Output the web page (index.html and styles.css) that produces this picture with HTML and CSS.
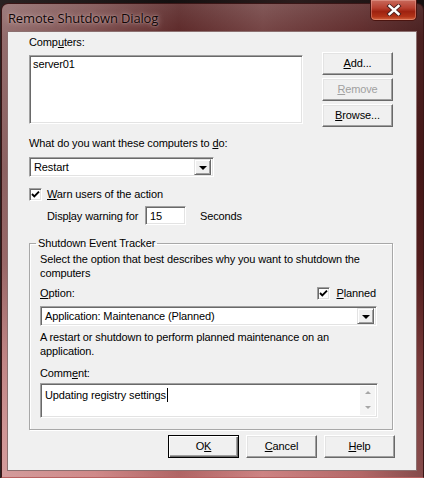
FILE: index.html
```html
<!DOCTYPE html>
<html>
<head>
<meta charset="utf-8">
<title>Remote Shutdown Dialog</title>
<link rel="stylesheet" href="styles.css">
</head>
<body>
<div class="window">
  <div class="titlebar">
    <span class="title">Remote Shutdown Dialog</span>
    <div class="close">
      <svg width="16" height="12" viewBox="0 0 16 12">
        <path d="M3.5 2 L12.5 10 M12.5 2 L3.5 10" stroke="#4a2020" stroke-width="4.2" stroke-linecap="square" fill="none"/>
        <path d="M3.5 2 L12.5 10 M12.5 2 L3.5 10" stroke="#ffffff" stroke-width="2.4" stroke-linecap="square" fill="none"/>
      </svg>
    </div>
  </div>
  <div class="client">
    <div class="top-row">
      <div class="computers">
        <div class="label">Comp<u>u</u>ters:</div>
        <div class="listbox sunken">server01</div>
      </div>
      <div class="side-buttons">
        <div class="btn"><span><u>A</u>dd...</span></div>
        <div class="btn disabled"><span><u>R</u>emove</span></div>
        <div class="btn"><span><u>B</u>rowse...</span></div>
      </div>
    </div>
    <div class="label what">What do you want these computers to <u>d</u>o:</div>
    <div class="combo sunken restart">
      <span class="combo-text">Restart</span>
      <span class="dd"><i class="tri"></i></span>
    </div>
    <div class="check-row warn">
      <span class="checkbox"><svg width="11" height="11" viewBox="0 0 11 11"><path d="M2 5 L4.3 7.3 L9 2.6" stroke="#000" stroke-width="1.9" fill="none"/></svg></span>
      <span class="check-label"><u>W</u>arn users of the action</span>
    </div>
    <div class="display-row">
      <span class="disp">Disp<u>l</u>ay warning for</span>
      <span class="num sunken">15</span>
      <span class="secs">Seconds</span>
    </div>
    <fieldset class="group">
      <legend>Shutdown Event Tracker</legend>
      <p class="desc">Select the option that best describes why you want to shutdown the<br>computers</p>
      <div class="option-row">
        <span><u>O</u>ption:</span>
        <span class="check-row planned">
          <span class="checkbox"><svg width="11" height="11" viewBox="0 0 11 11"><path d="M2 5 L4.3 7.3 L9 2.6" stroke="#000" stroke-width="1.9" fill="none"/></svg></span>
          <span class="check-label"><u>P</u>lanned</span>
        </span>
      </div>
      <div class="combo sunken wide">
        <span class="combo-text">Application: Maintenance (Planned)</span>
        <span class="dd"><i class="tri"></i></span>
      </div>
      <p class="desc desc2">A restart or shutdown to perform planned maintenance on an<br>application.</p>
      <div class="label comment-label">Comm<u>e</u>nt:</div>
      <div class="comment sunken">
        <span class="comment-text">Updating registry settings<span class="caret"></span></span>
        <span class="vscroll">
          <i class="arrow up"></i>
          <i class="arrow down"></i>
        </span>
      </div>
    </fieldset>
    <div class="dialog-buttons">
      <div class="btn default"><span>O<u>K</u></span></div>
      <div class="btn"><span><u>C</u>ancel</span></div>
      <div class="btn"><span><u>H</u>elp</span></div>
    </div>
  </div>
</div>
</body>
</html>
```
FILE: styles.css
```css
html, body {
  margin: 0;
  padding: 0;
}
body {
  width: 424px;
  height: 478px;
  overflow: hidden;
  background: linear-gradient(90deg, #2a2222 0%, #141010 40%, #2b1c1c 70%, #171010 100%);
  font-family: "Liberation Sans", Arial, sans-serif;
  font-size: 11px;
  letter-spacing: -0.12px;
  color: #000;
}
u { text-decoration: underline; text-underline-offset: 1px; }

.window {
  box-sizing: border-box;
  margin: 3px 0 0 1px;
  width: 423px;
  height: 475px;
  border: 1px solid #3a1616;
  border-bottom-color: #b86060;
  border-radius: 7px 7px 0 0;
  display: flex;
  flex-direction: column;
  background:
    linear-gradient(90deg, rgba(190,165,165,.5) 0%, rgba(160,120,120,.35) 22%, rgba(70,15,15,.35) 42%, rgba(140,95,95,.3) 62%, rgba(80,25,25,.35) 85%, rgba(50,15,15,.55) 100%),
    linear-gradient(180deg, #7e5656 0%, #683434 7%, #5a2020 35%, #742c2c 55%, #c26666 75%, #df8686 90%, #e99393 100%);
}

.titlebar {
  height: 27px;
  display: flex;
  align-items: center;
  padding-left: 6px;
  flex: none;
}
.title {
  font-family: "Open Sans", "Noto Sans", sans-serif;
  font-size: 13px;
  letter-spacing: -0.15px;
  color: #120606;
  text-shadow: 0 0 6px rgba(225,200,200,.85), 0 0 2px rgba(225,200,200,.6);
  margin-top: 1px;
}
.close {
  margin-left: auto;
  margin-right: 6px;
  align-self: flex-start;
  margin-top: -4px;
  width: 47px;
  height: 21px;
  box-sizing: border-box;
  border: 1px solid #4a1410;
  border-top: none;
  border-radius: 0 0 5px 5px;
  background: linear-gradient(180deg, #c86a5c 0%, #b84030 40%, #9e2210 58%, #b23318 82%, #d3643f 100%);
  box-shadow: inset 0 0 0 1px rgba(255,200,190,.35);
  display: flex;
  align-items: center;
  justify-content: center;
}

.client {
  flex: 1;
  margin: 0 6px 6px 5px;
  border: 1px solid #8c7070;
  background: #f0f0f0;
  padding: 3px 0 0 21px;
  display: flex;
  flex-direction: column;
  align-items: flex-start;
}

.label {
  line-height: 14px;
  height: 14px;
}

.sunken {
  box-sizing: border-box;
  background: #fff;
  border: 1px solid;
  border-color: #a0a0a0 #ffffff #ffffff #a0a0a0;
  box-shadow: inset 1px 1px 0 #696969, inset -1px -1px 0 #e3e3e3;
}

.top-row {
  display: grid;
  grid-template-columns: 274px 71px;
  column-gap: 19px;
  align-items: start;
}
.listbox {
  margin-top: 6px;
  height: 69px;
  padding: 2px 3px;
  line-height: 13px;
}
.side-buttons {
  margin-top: 17px;
  display: flex;
  flex-direction: column;
  gap: 3px;
}

.btn {
  box-sizing: border-box;
  height: 23px;
  width: 71px;
  border: 1px solid;
  border-color: #ffffff #696969 #696969 #ffffff;
  box-shadow: inset -1px -1px 0 #a0a0a0, inset 1px 1px 0 #e3e3e3;
  background: #f0f0f0;
  display: flex;
  align-items: center;
  justify-content: center;
  line-height: 13px;
}
.btn.disabled { color: #a0a0a0; }
.btn.default {
  border: 1px solid #000;
  box-shadow: inset 1px 1px 0 #fff, inset -1px -1px 0 #696969, inset -2px -2px 0 #a0a0a0;
}

.what { margin-top: 9px; }

.combo {
  margin-top: 7px;
  height: 20px;
  display: flex;
  align-items: center;
  padding: 2px;
}
.restart { width: 185px; }
.combo-text {
  flex: 1;
  padding-left: 2px;
  line-height: 14px;
}
.dd {
  box-sizing: border-box;
  width: 17px;
  height: 16px;
  border: 1px solid;
  border-color: #e3e3e3 #696969 #696969 #e3e3e3;
  box-shadow: inset 1px 1px 0 #fff, inset -1px -1px 0 #a0a0a0;
  background: #f0f0f0;
  display: flex;
  align-items: center;
  justify-content: center;
}
.tri {
  width: 0;
  height: 0;
  border-left: 4px solid transparent;
  border-right: 4px solid transparent;
  border-top: 4px solid #000;
  margin-top: 1px;
}

.check-row {
  display: flex;
  align-items: center;
  height: 14px;
}
.warn { margin-top: 10px; }
.checkbox {
  box-sizing: border-box;
  width: 13px;
  height: 13px;
  background: #fff;
  border: 1px solid;
  border-color: #a0a0a0 #fff #fff #a0a0a0;
  box-shadow: inset 1px 1px 0 #696969, inset -1px -1px 0 #e3e3e3;
  display: flex;
  align-items: center;
  justify-content: center;
}
.check-label {
  margin-left: 5px;
  line-height: 14px;
}

.display-row {
  margin-top: 5px;
  margin-left: 18px;
  display: flex;
  align-items: center;
  height: 19px;
}
.disp { width: 98px; white-space: nowrap; }
.num {
  width: 41px;
  height: 19px;
  padding: 2px 4px;
  line-height: 14px;
}
.secs { margin-left: 14px; }

.group {
  box-sizing: border-box;
  margin: 11px 0 0 0;
  width: 364px;
  min-width: 0;
  padding: 2px 10px 11px 10px;
  border: 1px solid #a8a8a8;
  box-shadow: inset 1px 1px 0 #fff, 1px 1px 0 #fff;
}
.group legend {
  padding: 0 2px;
  margin-left: -4px;
  line-height: 14px;
}
.desc {
  margin: 0;
  line-height: 14px;
}
.option-row {
  margin-top: 6px;
  width: 337px;
  display: flex;
  justify-content: space-between;
  align-items: center;
  line-height: 14px;
}
.planned .check-label { margin-left: 6px; margin-right: 0; }
.planned { margin-right: 1px; }

.wide {
  margin-top: 6px;
  width: 337px;
}
.desc2 { margin-top: 4px; }
.comment-label { margin-top: 8px; }
.comment {
  margin-top: 3px;
  width: 338px;
  height: 35px;
  display: flex;
  padding: 2px;
}
.comment-text {
  flex: 1;
  padding: 2px 2px 0 2px;
  line-height: 14px;
}
.caret {
  display: inline-block;
  width: 1px;
  height: 14px;
  background: #000;
  vertical-align: top;
  margin-left: 1px;
}
.vscroll {
  width: 15px;
  background: #f4f4f4;
  display: flex;
  flex-direction: column;
  justify-content: space-between;
  align-items: center;
  padding: 5px 0 6px;
  box-sizing: border-box;
}
.arrow {
  width: 0;
  height: 0;
  border-left: 3px solid transparent;
  border-right: 3px solid transparent;
}
.arrow.up { border-bottom: 3px solid #a6a6a6; }
.arrow.down { border-top: 3px solid #a6a6a6; }

.dialog-buttons {
  margin-top: 5px;
  align-self: stretch;
  display: flex;
  justify-content: flex-end;
  gap: 7px;
  padding-right: 21px;
}
.dialog-buttons .btn { width: 71px; }
```
